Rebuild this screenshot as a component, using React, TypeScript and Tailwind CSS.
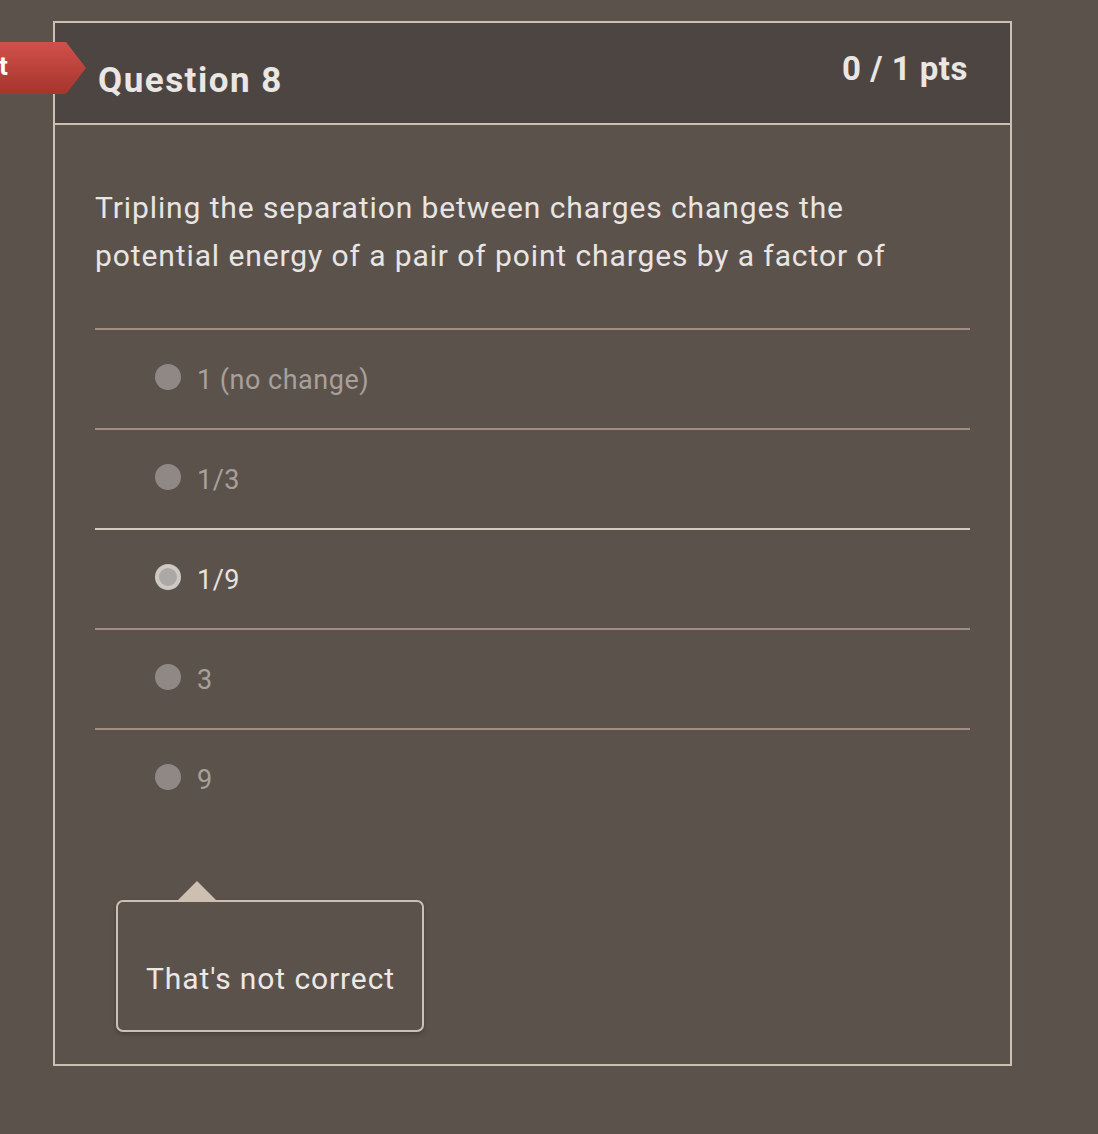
const answers = [
  { label: "1 (no change)", selected: false },
  { label: "1/3", selected: false },
  { label: "1/9", selected: true },
  { label: "3", selected: false },
  { label: "9", selected: false },
];

function Radio({ selected }: { selected: boolean }) {
  if (selected) {
    return (
      <span className="flex h-[26px] w-[26px] shrink-0 -translate-y-[4px] items-center justify-center rounded-full bg-[#cdc9c5]">
        <span className="h-[18px] w-[18px] rounded-full bg-[#aca8a5]" />
      </span>
    );
  }
  return <span className="h-[26px] w-[26px] shrink-0 -translate-y-[4px] rounded-full bg-[#8f8885]" />;
}

export default function App() {
  return (
    <div
      className="relative min-h-[1134px] bg-[#5c524c] pt-[21px] pl-[53px]"
      style={{ fontFamily: "Roboto, 'Liberation Sans', sans-serif" }}
    >
      {/* red tab over the left edge */}
      <div className="absolute left-0 top-[42px] flex h-[52px] w-[86px] items-center bg-gradient-to-b from-[#d2504a] to-[#a5352d] text-[26px] font-bold text-white [clip-path:polygon(0_0,66px_0,86px_50%,66px_100%,0_100%)]">
        <span className="-ml-[1px] -mt-[4px] leading-none">t</span>
      </div>

      <div className="w-[959px]">
        {/* header */}
        <div className="flex h-[104px] items-start justify-between border-2 border-[#cdbfb2] bg-[#4d4541] pl-[43px] pr-[42px]">
          <h2 className="mt-[34px] text-[35px] font-bold leading-[48px] tracking-[1.5px] text-[#e9e6e3]">Question 8</h2>
          <div className="mt-[24px] text-[33px] font-bold leading-[44px] tracking-[0.5px] text-[#e9e6e3]">0 / 1 pts</div>
        </div>

        {/* body */}
        <div className="-mt-[1px] border-2 border-t-0 border-[#cdbfb2] px-[40px] pt-[60px] pb-[32px]">
          <p className="max-w-[860px] text-[30px] leading-[48px] tracking-[0.9px] text-[#e8e5e2]">
            Tripling the separation between charges changes the potential energy of a pair of point charges by a factor of
          </p>

          <div className="mt-[48px]">
            {answers.map((a) => (
              <div
                key={a.label}
                className={`flex h-[100px] items-center border-t-2 pt-[3px] pl-[60px] ${
                  a.selected ? "border-[#d6cabe]" : "border-[#a08f82]"
                }`}
              >
                <Radio selected={a.selected} />
                <span
                  className={`ml-[16px] text-[27px] tracking-[0.5px] ${
                    a.selected ? "text-[#e6e2de]" : "text-[#a7a09b]"
                  }`}
                >
                  {a.label}
                </span>
              </div>
            ))}
          </div>

          {/* feedback */}
          <div className="relative ml-[21px] mt-[72px] w-[308px]">
            <div className="absolute left-[61px] -top-[19px] h-0 w-0 border-x-[20px] border-b-[20px] border-x-transparent border-b-[#cdbfb2]" />
            <div className="flex h-[132px] items-center rounded-[7px] border-2 border-[#cdbfb2] pt-[24px] pl-[28px] shadow-[0_2px_4px_rgba(0,0,0,0.25)]">
              <span className="text-[30px] tracking-[0.9px] text-[#ebe8e5]">That's not correct</span>
            </div>
          </div>
        </div>
      </div>
    </div>
  );
}
